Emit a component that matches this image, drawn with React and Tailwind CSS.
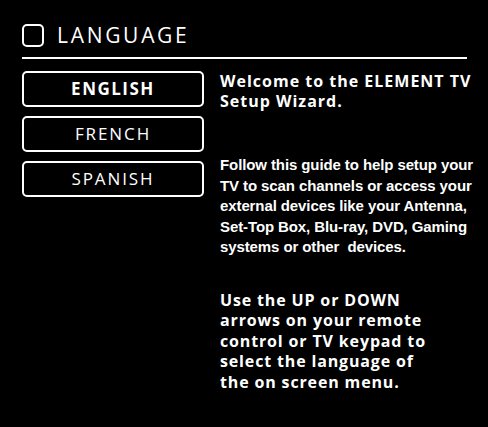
import React from 'react';

const languages = [
  { id: 'en', label: 'ENGLISH', active: true },
  { id: 'fr', label: 'FRENCH' },
  { id: 'es', label: 'SPANISH' },
];

const gotham = { fontFamily: '"Open Sans", "DejaVu Sans", sans-serif' };

const LanguageButton = ({ label, active }) => (
  <div
    className={
      'h-[36px] flex items-center justify-center rounded-[5px] border-2 border-white text-white text-[17px] ' +
      (active ? 'font-bold tracking-[1.5px]' : 'font-normal tracking-[1.9px]')
    }
  >
    {label}
  </div>
);

export default function App() {
  return (
    <div
      className="w-[488px] h-[427px] bg-black text-white px-[22px] pt-[22px] overflow-hidden"
      style={gotham}
    >
      <div className="flex items-center gap-[13px]">
        <div className="w-[22px] h-[23px] rounded-[5px] border-2 border-white" />
        <h1 className="text-[21px] leading-[26px] tracking-[2.7px] font-normal">LANGUAGE</h1>
      </div>
      <div className="mt-[9px] h-[2px] w-[445px] bg-white" />

      <div className="mt-[12px] flex gap-[16px]">
        <div className="w-[182px] shrink-0 flex flex-col gap-[9px]">
          {languages.map(lang => (
            <LanguageButton key={lang.id} label={lang.label} active={lang.active} />
          ))}
        </div>

        <div className="whitespace-nowrap">
          <p className="text-[16px] leading-[20px] font-bold tracking-[1px]">
            Welcome to the ELEMENT TV
            <br />
            Setup Wizard.
          </p>
          <p
            className="mt-[44px] text-[15px] leading-[20.5px] font-bold tracking-[-0.1px]"
            style={{ fontFamily: '"Liberation Sans", Arial, sans-serif' }}
          >
            Follow this guide to help setup your
            <br />
            TV to scan channels or access your
            <br />
            external devices like your Antenna,
            <br />
            Set-Top Box, Blu-ray, DVD, Gaming
            <br />
            systems or other&nbsp; devices.
          </p>
          <p className="mt-[32px] text-[16px] leading-[20.5px] font-bold tracking-[0.85px]">
            Use the UP or DOWN
            <br />
            arrows on your remote
            <br />
            control or TV keypad to
            <br />
            select the language of
            <br />
            the on screen menu.
          </p>
        </div>
      </div>
    </div>
  );
}
